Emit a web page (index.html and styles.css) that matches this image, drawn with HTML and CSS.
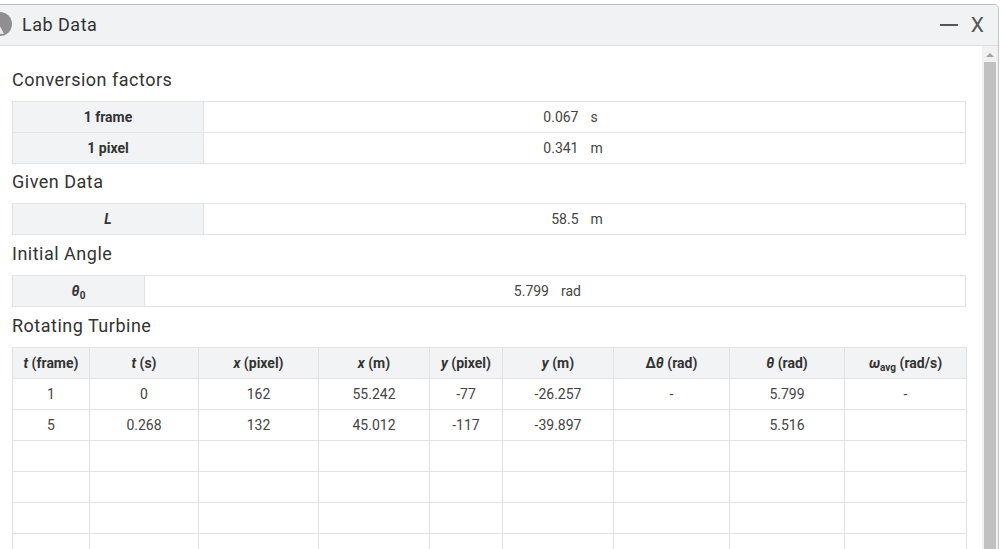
FILE: index.html
```html
<!DOCTYPE html>
<html>
<head>
<meta charset="utf-8">
<link rel="stylesheet" href="styles.css">
</head>
<body>
<div class="window">
  <div class="titlebar">
    <span class="avatar"><span class="avatar-glyph"></span></span>
    <span class="title">Lab Data</span>
    <span class="spacer"></span>
    <span class="minimize"></span>
    <span class="close">X</span>
  </div>
  <div class="body">
    <div class="content">
      <h2 class="heading first">Conversion factors</h2>
      <table class="kv">
        <colgroup><col class="key-wide"><col></colgroup>
        <tr><th>1 frame</th><td><div class="val"><span class="num">0.067</span><span class="unit">s</span></div></td></tr>
        <tr><th>1 pixel</th><td><div class="val"><span class="num">0.341</span><span class="unit">m</span></div></td></tr>
      </table>

      <h2 class="heading tight">Given Data</h2>
      <table class="kv">
        <colgroup><col class="key-wide"><col></colgroup>
        <tr><th><i>L</i></th><td><div class="val"><span class="num">58.5</span><span class="unit">m</span></div></td></tr>
      </table>

      <h2 class="heading">Initial Angle</h2>
      <table class="kv">
        <colgroup><col class="key-narrow"><col></colgroup>
        <tr><th><i>θ</i><sub>0</sub></th><td><div class="val"><span class="num">5.799</span><span class="unit">rad</span></div></td></tr>
      </table>

      <h2 class="heading">Rotating Turbine</h2>
      <table class="grid">
        <colgroup>
          <col class="c1"><col class="c2"><col class="c3"><col class="c4"><col class="c5">
          <col class="c6"><col class="c7"><col class="c8"><col class="c9">
        </colgroup>
        <tr>
          <th><i>t</i> (frame)</th>
          <th><i>t</i> (s)</th>
          <th><i>x</i> (pixel)</th>
          <th><i>x</i> (m)</th>
          <th><i>y</i> (pixel)</th>
          <th><i>y</i> (m)</th>
          <th>Δ<i>θ</i> (rad)</th>
          <th><i>θ</i> (rad)</th>
          <th><i>ω</i><sub>avg</sub> (rad/s)</th>
        </tr>
        <tr><td>1</td><td>0</td><td>162</td><td>55.242</td><td>-77</td><td>-26.257</td><td>-</td><td>5.799</td><td>-</td></tr>
        <tr><td>5</td><td>0.268</td><td>132</td><td>45.012</td><td>-117</td><td>-39.897</td><td></td><td>5.516</td><td></td></tr>
        <tr><td></td><td></td><td></td><td></td><td></td><td></td><td></td><td></td><td></td></tr>
        <tr><td></td><td></td><td></td><td></td><td></td><td></td><td></td><td></td><td></td></tr>
        <tr><td></td><td></td><td></td><td></td><td></td><td></td><td></td><td></td><td></td></tr>
        <tr><td></td><td></td><td></td><td></td><td></td><td></td><td></td><td></td><td></td></tr>
      </table>
    </div>
    <div class="scrollbar">
      <div class="sb-up"><span class="sb-arrow"></span></div>
      <div class="sb-thumb"></div>
    </div>
  </div>
</div>
</body>
</html>
```

FILE: styles.css
```css
html, body {
  margin: 0;
  padding: 0;
  background: #ffffff;
  overflow: hidden;
}
body {
  font-family: Roboto, "Liberation Sans", Arial, sans-serif;
  color: #333333;
  width: 1002px;
  height: 549px;
}
.window {
  margin-top: 4px;
  width: 999px;
  height: 545px;
  border-top: 1px solid #bdbdbd;
  border-right: 1px solid #c4c4c4;
  border-top-right-radius: 5px;
  box-sizing: border-box;
  display: flex;
  flex-direction: column;
  overflow: hidden;
}
.titlebar {
  flex: 0 0 40px;
  background: #f1f2f4;
  border-bottom: 1px solid #dedede;
  display: flex;
  align-items: center;
  padding-right: 14px;
}
.avatar {
  width: 24px;
  height: 24px;
  border-radius: 50%;
  background: #8f8f8f;
  margin-left: -12px;
  margin-right: 10px;
  margin-top: -2px;
  position: relative;
  overflow: hidden;
}
.avatar-glyph {
  position: absolute;
  left: 8px;
  top: 14px;
  width: 0;
  height: 0;
  border-left: 4px solid transparent;
  border-right: 4px solid transparent;
  border-bottom: 8px solid #e8e8e8;
}
.title {
  font-size: 18px;
  letter-spacing: 0.5px;
  color: #333333;
  margin-top: -2px;
}
.spacer { flex: 1; }
.minimize {
  width: 18px;
  height: 2px;
  background: #555555;
  margin-right: 13px;
  margin-top: -1px;
}
.close {
  font-size: 21px;
  color: #555555;
  line-height: 1;
}
.body {
  flex: 1;
  display: flex;
  min-height: 0;
}
.content {
  flex: 1;
  padding: 16px 16px 0 12px;
  overflow: hidden;
}
.heading {
  font-size: 18px;
  font-weight: 400;
  letter-spacing: 0.5px;
  line-height: 24px;
  margin: 7px 0 9px 0;
  color: #333333;
}
.heading.first { margin-top: 6px; }
.heading.tight { margin-top: 6px; }
table {
  border-collapse: collapse;
  width: 954px;
  table-layout: fixed;
  font-size: 14px;
}
th, td {
  border: 1px solid #e2e2e2;
  height: 31px;
  padding: 0 4px;
  text-align: center;
  box-sizing: border-box;
  white-space: nowrap;
}
th {
  background: #f2f3f5;
  font-weight: 700;
  color: #333333;
}
td { color: #444444; }
sub {
  font-size: 10px;
  vertical-align: -3px;
  line-height: 0;
}
.key-wide { width: 191px; }
.key-narrow { width: 132px; }
.val {
  display: flex;
  gap: 12px;
}
.num { flex: 1 1 0; text-align: right; }
.unit { flex: 1 1 0; text-align: left; }
.c1 { width: 77px; }
.c2 { width: 109px; }
.c3 { width: 120px; }
.c4 { width: 111px; }
.c5 { width: 73px; }
.c6 { width: 111px; }
.c7 { width: 116px; }
.c8 { width: 115px; }
.c9 { width: 122px; }
.scrollbar {
  flex: 0 0 16px;
  background: #f1f1f1;
  display: flex;
  flex-direction: column;
}
.sb-up {
  flex: 0 0 16px;
  display: flex;
  justify-content: center;
  align-items: center;
  padding-top: 2px;
  box-sizing: border-box;
}
.sb-arrow {
  width: 0;
  height: 0;
  border-left: 4px solid transparent;
  border-right: 4px solid transparent;
  border-bottom: 4px solid #a3a3a3;
}
.sb-thumb {
  flex: 1;
  background: #c1c1c1;
  margin: 0 2px;
}
```
